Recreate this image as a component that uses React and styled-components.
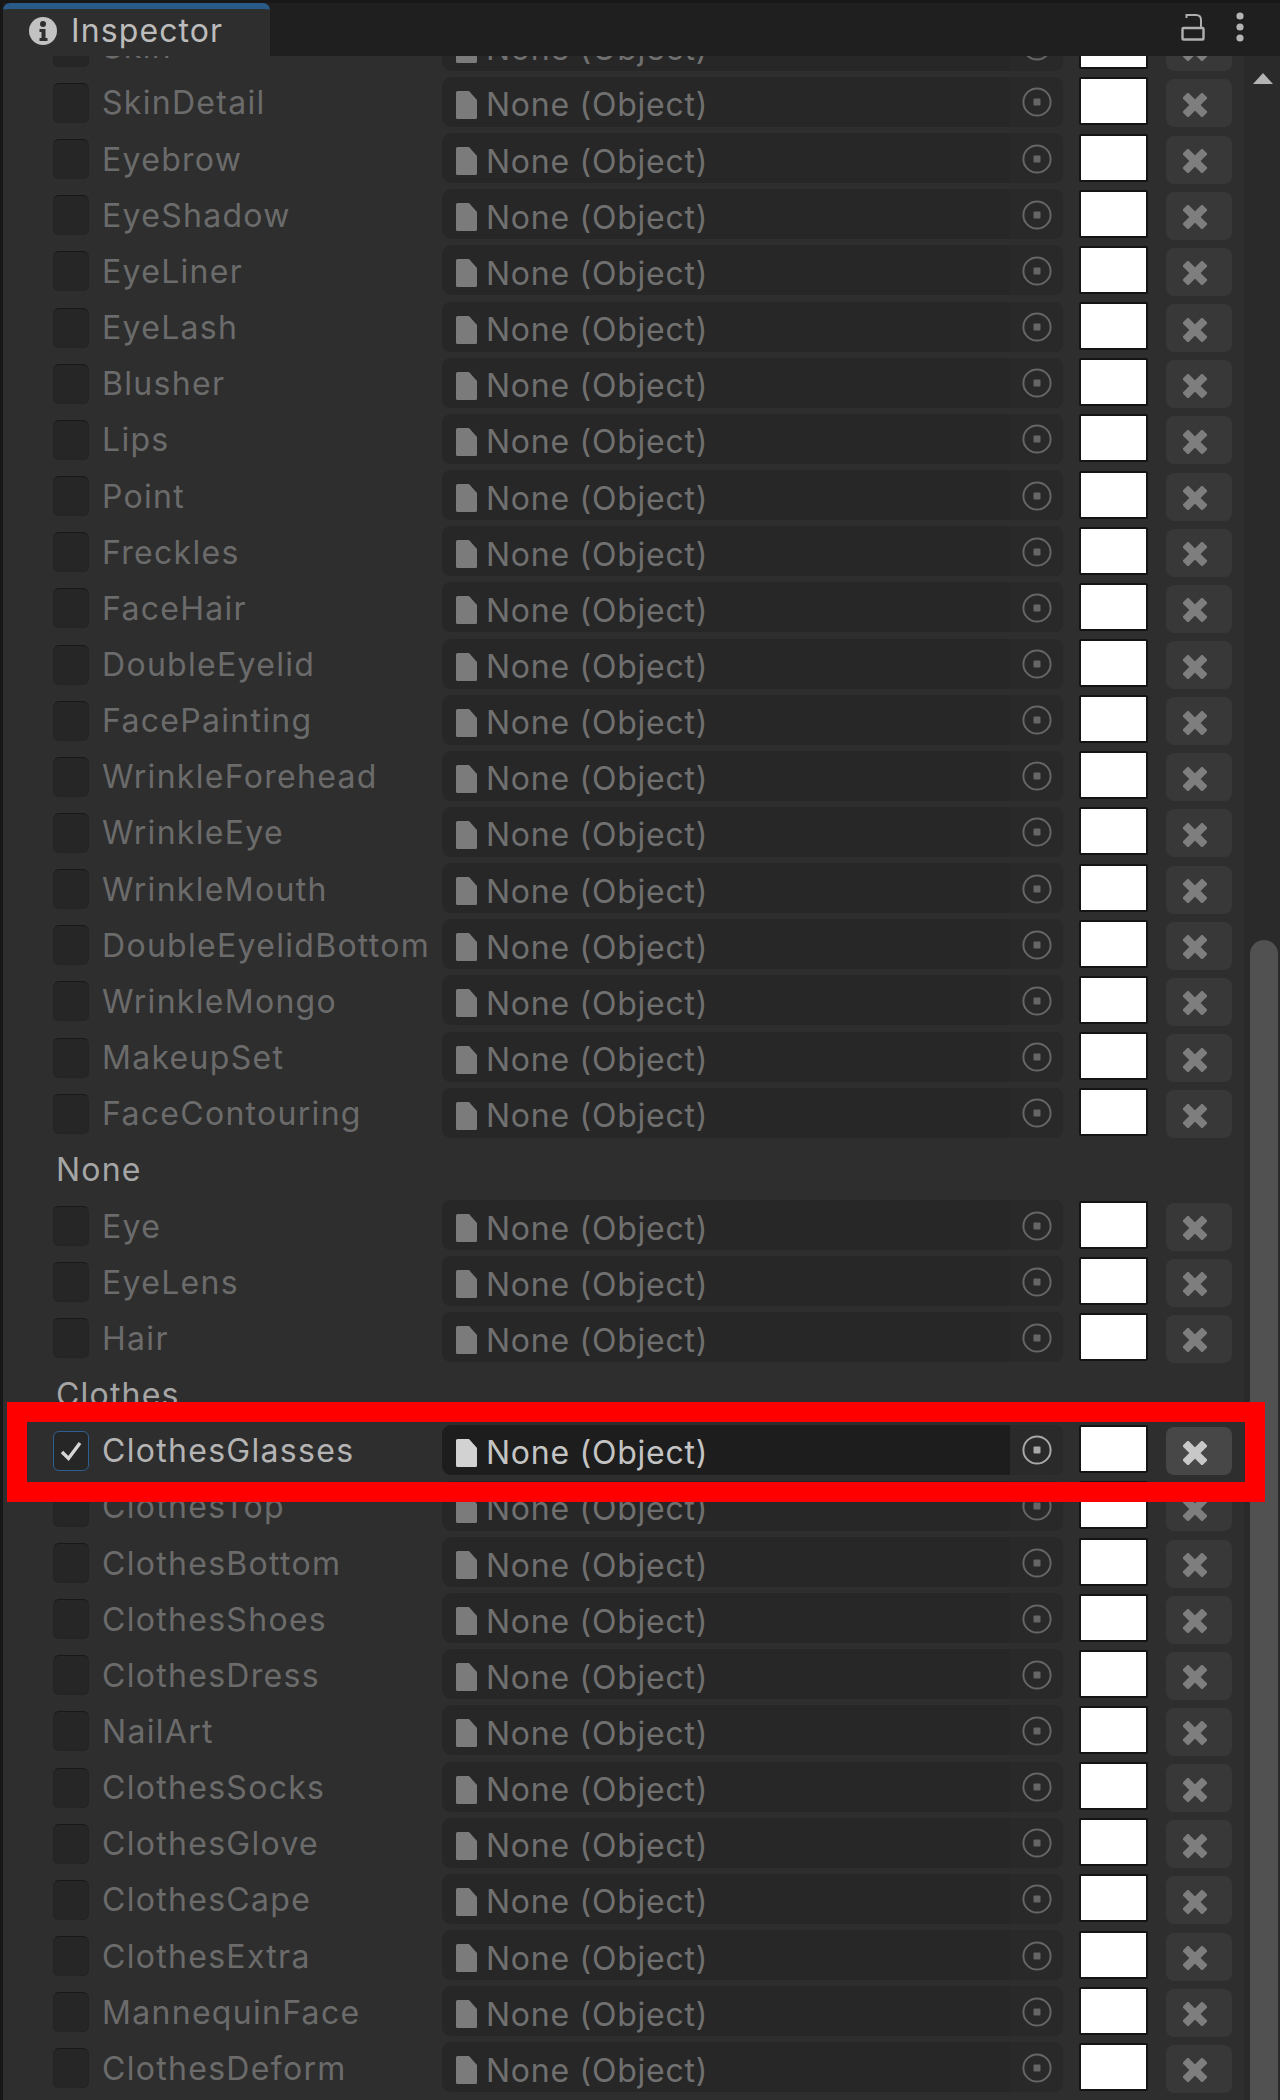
import React from "react";
import styled, { createGlobalStyle } from "styled-components";

const Global = createGlobalStyle`
  html, body { margin: 0; padding: 0; background: #171717; }
  body { font-family: Inter, "Liberation Sans", sans-serif; }
`;

const Window = styled.div`
  position: relative;
  width: 1280px;
  height: 2100px;
  overflow: hidden;
  box-sizing: border-box;
  padding: 3px 0 0 3px;
  background: #171717;
  display: flex;
  flex-direction: column;
`;
const TopBar = styled.div`
  flex: none;
  height: 53px;
  background: #1f1f1f;
  display: flex;
  align-items: stretch;
  position: relative;
  z-index: 2;
`;
const Tab = styled.div`
  width: 267px;
  box-sizing: border-box;
  border-top: 6px solid #2a5a88;
  border-radius: 7px 7px 0 0;
  background: #2e2e2e;
  display: flex;
  align-items: center;
  gap: 14px;
  padding: 0 0 4px 26px;
  color: #bcbcbc;
  font-size: 32px;
  letter-spacing: 1.1px;
`;
const TopActions = styled.div`
  margin-left: auto;
  display: flex;
  align-items: center;
  gap: 31px;
  padding: 0 36px 6px 0;
`;
const Body = styled.div`
  flex: 1;
  min-height: 0;
  display: flex;
  background: #2e2e2e;
`;
const List = styled.div`
  flex: 1;
  min-width: 0;
  overflow: hidden;
`;
const Scroller = styled.div`
  margin-top: -37.3px;
`;
const Row = styled.div`
  height: 56.17px;
  display: flex;
  align-items: center;
  padding-left: 50px;
`;
const Box = styled.div`
  flex: none;
  box-sizing: border-box;
  width: 36px;
  height: 40px;
  border-radius: 6px;
  background: #262626;
  border: 1px solid ${p => (p.$on ? "#2f5f90" : "#242424")};
  border-top-color: ${p => (p.$on ? "#2f5f90" : "#181818")};
  display: flex;
  align-items: center;
  justify-content: center;
`;
const Label = styled.div`
  flex: none;
  width: 353px;
  box-sizing: border-box;
  padding-left: 13px;
  font-size: 32px;
  letter-spacing: 1.3px;
  white-space: nowrap;
  color: ${p => (p.$on ? "#b4b4b4" : "#6b6b6b")};
`;
const Section = styled.div`
  height: 56.17px;
  display: flex;
  align-items: center;
  padding-left: 53px;
  font-size: 32px;
  letter-spacing: 1.2px;
  color: #a6a6a6;
`;
const Field = styled.div`
  flex: none;
  width: 621px;
  height: 50px;
  box-sizing: border-box;
  margin-top: -2px;
  border-radius: 9px;
  background: ${p => (p.$on ? "#1d1d1d" : "#272727")};
  display: flex;
  align-items: center;
  overflow: hidden;
  padding-left: 14px;
  gap: 9px;
`;
const FieldText = styled.span`
  flex: 1;
  padding-top: 6px;
  font-size: 32px;
  letter-spacing: 0.75px;
  white-space: nowrap;
  color: ${p => (p.$on ? "#c4c4c4" : "#707070")};
`;
const Picker = styled.div`
  flex: none;
  width: 53px;
  align-self: stretch;
  background: ${p => (p.$on ? "#2a2a2a" : "#292929")};
  display: flex;
  align-items: center;
  justify-content: center;
`;
const Swatch = styled.div`
  flex: none;
  box-sizing: border-box;
  width: 69px;
  height: 48px;
  margin: -3px 0 0 16px;
  background: #fff;
  border: 2px solid #141414;
  border-radius: 2px;
`;
const Clear = styled.div`
  flex: none;
  width: 66px;
  height: 48px;
  margin: 1px 0 0 18px;
  border-radius: 8px;
  background: ${p => (p.$on ? "#474747" : "#383838")};
  display: flex;
  align-items: center;
  justify-content: center;
`;
const Track = styled.div`
  flex: none;
  width: 36px;
  background: #2a2a2a;
  display: flex;
  flex-direction: column;
  align-items: center;
  padding-top: 17px;
  box-sizing: border-box;
`;
const Thumb = styled.div`
  width: 28px;
  margin: 856px 0 0 3px;
  flex: 1;
  border-radius: 14px 14px 0 0;
  background: #515151;
`;
const Frame = styled.div`
  position: absolute;
  left: 7px;
  top: 1402px;
  width: 1258px;
  height: 100px;
  box-sizing: border-box;
  border: 20px solid #ff0000;
  z-index: 3;
`;

const Doc = ({ c }) => (
  <svg width="21" height="28" viewBox="0 0 21 28" style={{ flex: "none", marginTop: 6 }}>
    <path d="M1.5 0H13L21 9V26.5A1.5 1.5 0 0 1 19.5 28H1.5A1.5 1.5 0 0 1 0 26.5V1.5A1.5 1.5 0 0 1 1.5 0Z" fill={c} />
  </svg>
);
const Target = ({ c }) => (
  <svg width="30" height="30" viewBox="0 0 30 30" style={{ marginTop: 1 }}>
    <circle cx="15" cy="15" r="13.6" fill="none" stroke={c} strokeWidth="2" />
    <rect x="11.5" y="11.5" width="7" height="7" rx="1" fill={c} />
  </svg>
);
const Cross = ({ c }) => (
  <svg width="24" height="24" viewBox="0 0 24 24" style={{ marginLeft: -9, marginTop: 3 }}>
    <path d="M5 5L19 19M19 5L5 19" stroke={c} strokeWidth="8" strokeLinecap="square" fill="none" />
  </svg>
);
const Tick = () => (
  <svg width="24" height="22" viewBox="0 0 24 22">
    <path d="M3 12L9.5 18.5L21 3" stroke="#d6d6d6" strokeWidth="3.4" fill="none" />
  </svg>
);
const Info = () => (
  <svg width="28" height="28" viewBox="0 0 28 28" style={{ flex: "none" }}>
    <circle cx="14" cy="14" r="14" fill="#c2c2c2" />
    <circle cx="14" cy="7" r="3" fill="#2e2e2e" />
    <path d="M10.5 12H16.5V21H18.5V24H10.5V21H12.5V15H10.5Z" fill="#2e2e2e" />
  </svg>
);
const Lock = () => (
  <svg width="24" height="28" viewBox="0 0 24 28">
    <path d="M5.5 5V2H15C18 2 20 4 20 7V14" fill="none" stroke="#b0b0b0" strokeWidth="2" />
    <rect x="1.5" y="15" width="21" height="11.5" rx="1" fill="none" stroke="#b0b0b0" strokeWidth="2.4" />
  </svg>
);
const Dots = () => (
  <svg width="8" height="30" viewBox="0 0 8 30">
    <circle cx="4" cy="4" r="3.6" fill="#b4b4b4" />
    <circle cx="4" cy="15" r="3.6" fill="#b4b4b4" />
    <circle cx="4" cy="26" r="3.6" fill="#b4b4b4" />
  </svg>
);
const UpArrow = () => (
  <svg width="20" height="11" viewBox="0 0 20 11" style={{ flex: "none", marginLeft: 2 }}>
    <path d="M10 0L20 11H0Z" fill="#b4b4b4" />
  </svg>
);

const rows = [
  "Skin", "SkinDetail", "Eyebrow", "EyeShadow", "EyeLiner", "EyeLash", "Blusher", "Lips", "Point", "Freckles",
  "FaceHair", "DoubleEyelid", "FacePainting", "WrinkleForehead", "WrinkleEye", "WrinkleMouth",
  "DoubleEyelidBottom", "WrinkleMongo", "MakeupSet", "FaceContouring",
  { section: "None" }, "Eye", "EyeLens", "Hair",
  { section: "Clothes" }, { on: "ClothesGlasses" }, "ClothesTop", "ClothesBottom", "ClothesShoes", "ClothesDress",
  "NailArt", "ClothesSocks", "ClothesGlove", "ClothesCape", "ClothesExtra", "MannequinFace", "ClothesDeform",
];

const Item = ({ name, on }) => (
  <Row>
    <Box $on={on}>{on && <Tick />}</Box>
    <Label $on={on}>{name}</Label>
    <Field $on={on}>
      <Doc c={on ? "#d2d2d2" : "#7b7b7b"} />
      <FieldText $on={on}>None (Object)</FieldText>
      <Picker $on={on}><Target c={on ? "#a8a8a8" : "#666666"} /></Picker>
    </Field>
    <Swatch />
    <Clear $on={on}><Cross c={on ? "#c8c8c8" : "#7e7e7e"} /></Clear>
  </Row>
);

export default function App() {
  return (
    <Window>
      <Global />
      <TopBar>
        <Tab><Info />Inspector</Tab>
        <TopActions><Lock /><Dots /></TopActions>
      </TopBar>
      <Body>
        <List>
          <Scroller>
            {rows.map((r, i) =>
              typeof r === "string" ? <Item key={i} name={r} />
              : r.section ? <Section key={i}>{r.section}</Section>
              : <Item key={i} name={r.on} on />
            )}
          </Scroller>
        </List>
        <Track><UpArrow /><Thumb /></Track>
      </Body>
      <Frame />
    </Window>
  );
}
